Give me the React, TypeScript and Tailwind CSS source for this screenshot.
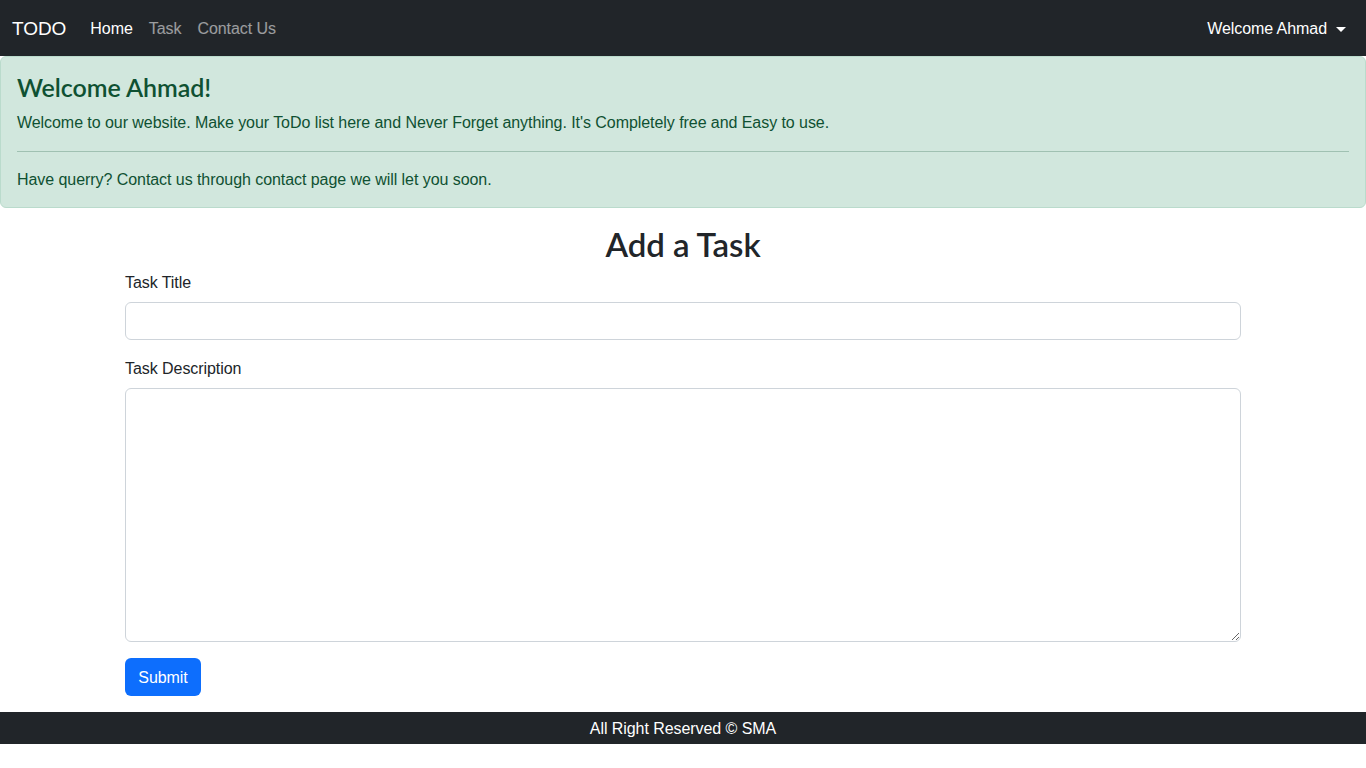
const font = "font-['Segoe_UI','Liberation_Sans',Arial,sans-serif]";
const headingFont = "font-['Segoe_UI',Lato,'Liberation_Sans',sans-serif]";

function Navbar() {
  return (
    <nav className="flex h-[56px] items-center justify-between bg-[#212529] px-3 pt-[2px]">
      <div className="flex items-center">
        <a href="#" className="mr-4 text-[19px] leading-[30px] text-white">
          TODO
        </a>
        <ul className="flex items-center">
          <li>
            <a href="#" className="block px-2 py-2 text-white">
              Home
            </a>
          </li>
          <li>
            <a href="#" className="block px-2 py-2 text-white/55">
              Task
            </a>
          </li>
          <li>
            <a href="#" className="block px-2 py-2 text-white/55">
              Contact Us
            </a>
          </li>
        </ul>
      </div>
      <a href="#" className="flex items-center px-2 py-2 text-white">
        Welcome Ahmad
        <span className="ml-[9px] mt-[1px] h-0 w-0 border-x-[5px] border-t-[5px] border-x-transparent border-t-white" />
      </a>
    </nav>
  );
}

function Alert() {
  return (
    <div className="rounded-[6px] border border-[#badbcc] bg-[#d1e7dd] px-4 pt-[16px] pb-[15px] text-[#0f5132]">
      <h4 className={`${headingFont} mb-[9px] text-[25px] font-semibold leading-[29px]`}>Welcome Ahmad!</h4>
      <p>
        Welcome to our website. Make your ToDo list here and Never Forget anything. It's Completely free
        and Easy to use.
      </p>
      <hr className="my-4 border-t border-[#0f5132]/25" />
      <p>Have querry? Contact us through contact page we will let you soon.</p>
    </div>
  );
}

function TaskForm() {
  return (
    <div className="mx-auto w-[1140px] px-3">
      <h2
        className={`${headingFont} mt-[16px] mb-[6px] text-center text-[33px] font-semibold leading-[40px] text-[#212529]`}
      >
        Add a Task
      </h2>
      <form onSubmit={(e) => e.preventDefault()}>
        <div className="mb-4">
          <label htmlFor="title" className="mb-2 block pt-[1px] leading-[23px]">
            Task Title
          </label>
          <input
            id="title"
            type="text"
            className="block h-[38px] w-full rounded-[6px] border border-[#ced4da] px-3 outline-none"
          />
        </div>
        <div className="mb-4">
          <label htmlFor="desc" className="mb-2 block pt-[1px] leading-[23px]">
            Task Description
          </label>
          <textarea
            id="desc"
            className="block h-[254px] w-full rounded-[6px] border border-[#ced4da] px-3 py-1.5 outline-none"
          />
        </div>
        <button type="submit" className="h-[38px] w-[76px] rounded-[6px] bg-[#0d6efd] pt-[1px] text-white">
          Submit
        </button>
      </form>
    </div>
  );
}

export default function App() {
  return (
    <div className={`${font} min-h-screen bg-white text-[16px] leading-6 tracking-[-0.06px] text-[#212529]`}>
      <Navbar />
      <Alert />
      <TaskForm />
      <footer className="mt-4 flex h-[32px] items-center justify-center bg-[#212529] pt-[2px] text-white">
        All Right Reserved © SMA
      </footer>
    </div>
  );
}
